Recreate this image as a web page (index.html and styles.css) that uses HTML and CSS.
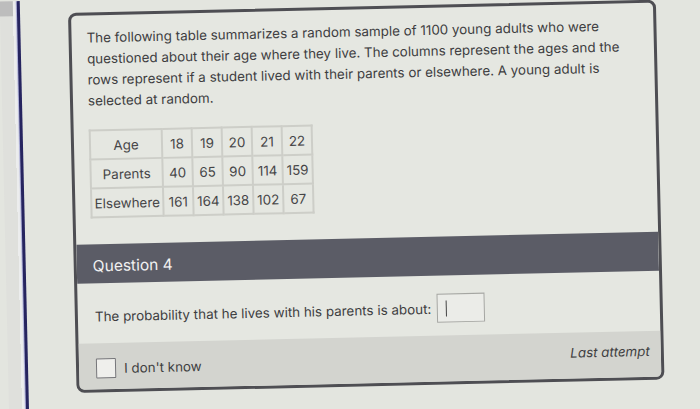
FILE: index.html
```html
<!DOCTYPE html>
<html lang="en">
<head>
<meta charset="utf-8">
<title>Question 4</title>
<link rel="stylesheet" href="styles.css">
</head>
<body>
<div class="screen">
  <div class="sidebar"><div class="tab"></div></div>
  <div class="rail"></div>
  <main class="main">
    <section class="card">
      <div class="card-body">
        <p class="intro">The following table summarizes a random sample of 1100 young adults who were questioned about their age where they live. The columns represent the ages and the rows represent if a student lived with their parents or elsewhere. A young adult is selected at random.</p>
        <table class="data">
          <colgroup>
            <col class="c-label"><col class="c-num"><col class="c-num"><col class="c-num"><col class="c-num"><col class="c-num">
          </colgroup>
          <tr><td>Age</td><td>18</td><td>19</td><td>20</td><td>21</td><td>22</td></tr>
          <tr><td>Parents</td><td>40</td><td>65</td><td>90</td><td>114</td><td>159</td></tr>
          <tr><td>Elsewhere</td><td>161</td><td>164</td><td>138</td><td>102</td><td>67</td></tr>
        </table>
      </div>
      <div class="q-head">Question 4</div>
      <div class="q-body">
        <span class="q-text">The probability that he lives with his parents is about:</span>
        <span class="answer"><span class="caret"></span></span>
      </div>
      <div class="q-foot">
        <label class="idk"><span class="box"></span>I don't know</label>
        <span class="last">Last attempt</span>
      </div>
    </section>
  </main>
</div>
</body>
</html>
```

FILE: styles.css
```css
html, body {
  margin: 0;
  padding: 0;
  height: 409px;
  overflow: hidden;
}

body {
  background: #e3e5df;
  font-family: Inter, "Noto Sans", "Liberation Sans", sans-serif;
  color: #3d3d3f;
}

.screen {
  display: flex;
  height: 409px;
  transform: rotate(-1.3deg);
  transform-origin: 68px 13px;
}

.sidebar {
  width: 17px;
  background: linear-gradient(to right, #dfe0dc 0 13px, #eceded 13px 17px);
}

.tab {
  width: 13px;
  height: 15px;
  background: #bdbdbd;
}

.rail {
  width: 3px;
  background: #26245f;
  box-shadow: -1px 0 1px #a9abd6;
}

.main {
  padding: 13px 0 0 48px;
}

.card {
  width: 582px;
  border: 3px solid #4e4e53;
  border-radius: 8px;
  overflow: hidden;
  background: #e5e7e1;
}

.card-body {
  padding: 12px 25px 26px 15px;
}

.intro {
  margin: 0;
  font-size: 13.4px;
  line-height: 21px;
  color: #3d3d3f;
}

.data {
  margin-top: 18px;
  border-collapse: collapse;
  table-layout: fixed;
  font-size: 13.4px;
  color: #454547;
}

.c-label { width: 72px; }
.c-num { width: 30px; }

.data td {
  height: 27px;
  padding: 0;
  border: 2px solid #cdcec8;
  text-align: center;
  white-space: nowrap;
}

.q-head {
  height: 39px;
  box-sizing: border-box;
  padding: 4px 0 0 16px;
  display: flex;
  align-items: center;
  background: #5b5c66;
  color: #f1f1f1;
  font-size: 15.5px;
}

.q-body {
  height: 60px;
  box-sizing: border-box;
  padding: 5px 0 0 17px;
  display: flex;
  align-items: center;
  gap: 6px;
  font-size: 13.4px;
  color: #3d3d3f;
}

.answer {
  width: 38px;
  height: 27px;
  padding-left: 8px;
  display: flex;
  align-items: center;
  border: 1px solid #a5a6a2;
  background: #ebece8;
}

.caret {
  width: 1px;
  height: 16px;
  background: #444;
}

.q-foot {
  height: 46px;
  box-sizing: border-box;
  padding: 0 11px 0 17px;
  display: flex;
  justify-content: space-between;
  background: #d3d4cf;
  font-size: 13.4px;
  color: #3f3f41;
}

.idk {
  display: flex;
  align-items: center;
  gap: 8px;
  margin-top: 4px;
}

.box {
  width: 18px;
  height: 18px;
  border: 1.5px solid #76767a;
  background: #efefec;
  border-radius: 1px;
}

.last {
  align-self: center;
  margin-top: -6px;
  font-style: italic;
}
```
